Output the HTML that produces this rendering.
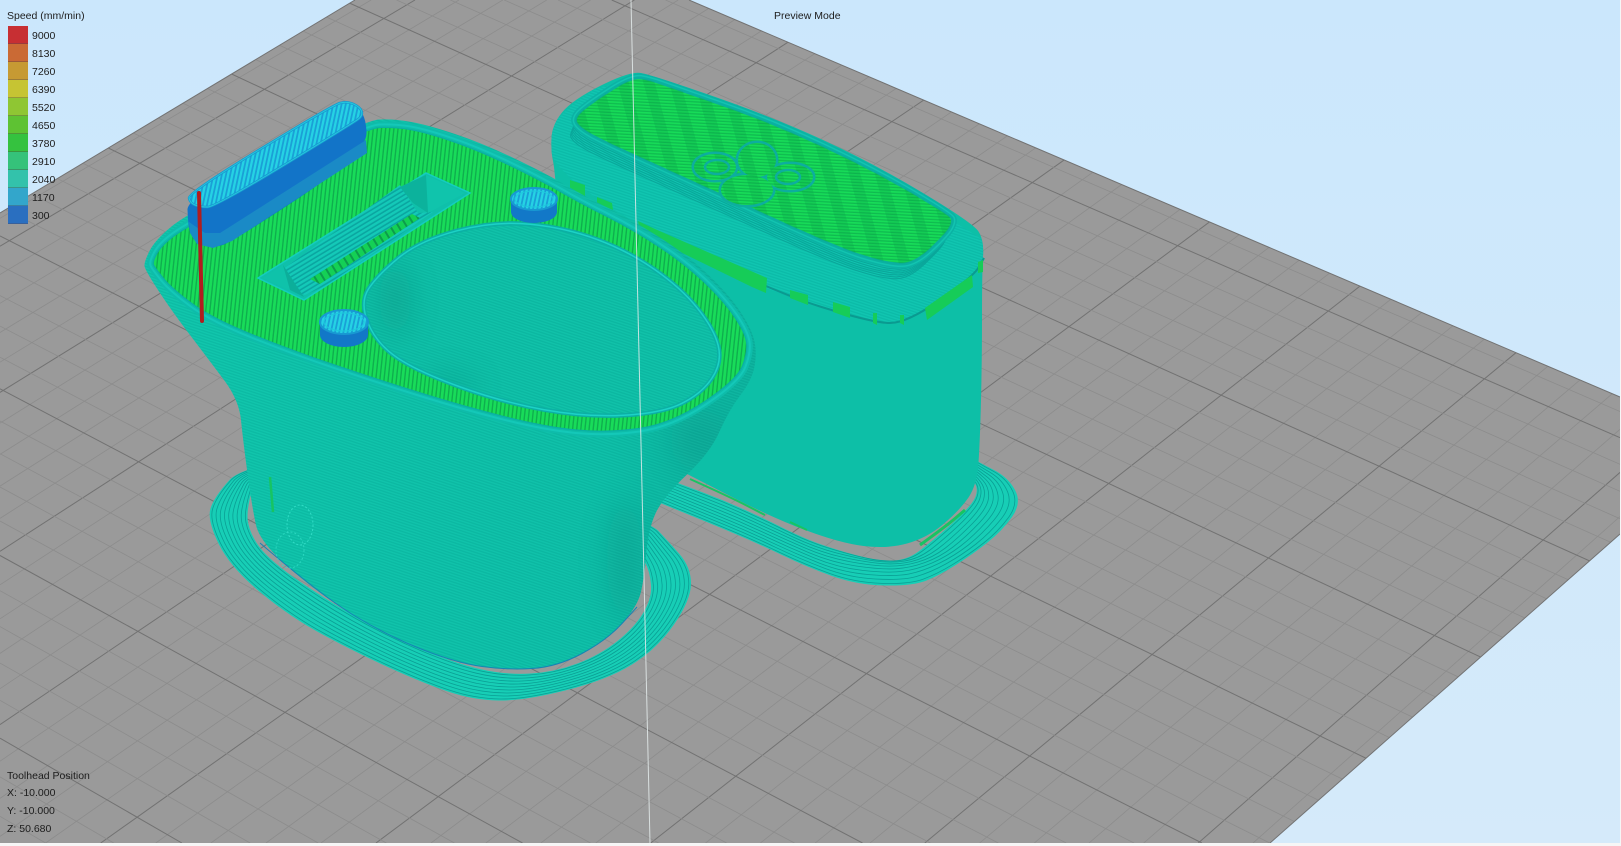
<!DOCTYPE html>
<html><head><meta charset="utf-8"><title>Preview Mode</title>
<style>
html,body{margin:0;padding:0;background:#f6f6f6;}
#w{position:relative;width:1621px;height:846px;overflow:hidden;font-family:"Liberation Sans",sans-serif;font-size:10.5px;color:#1c1c1c;}
svg{position:absolute;left:0;top:0;}
.t{position:absolute;line-height:14px;white-space:pre;}
.sw{position:absolute;left:8px;width:20px;height:17px;border:0 solid;border-bottom-width:1px;box-sizing:content-box;}
</style></head><body><div id="w">
<svg id="s" width="1621" height="846" viewBox="0 0 1621 846" xmlns="http://www.w3.org/2000/svg">
<defs>
<linearGradient id="bg" x1="0" y1="0" x2="0" y2="1"><stop offset="0" stop-color="#cbe7fc"/><stop offset="1" stop-color="#d5eafa"/></linearGradient>
<linearGradient id="bodyg" x1="0" y1="0" x2="1" y2="0"><stop offset="0" stop-color="#0ec3aa"/><stop offset=".75" stop-color="#0cbda6"/><stop offset="1" stop-color="#0bb09c"/></linearGradient>
<pattern id="gs" width="4.1" height="4.1" patternUnits="userSpaceOnUse" patternTransform="rotate(6)"><rect width="4.1" height="4.1" fill="#0fae4e"/><rect width="2.7" height="4.1" fill="#18dc59"/></pattern>
<pattern id="fh" width="3" height="3" patternUnits="userSpaceOnUse" patternTransform="rotate(3)"><rect width="3" height="3" fill="#0fbb50"/><rect width="3" height="1.7" fill="#17dc58"/></pattern>
<pattern id="mb" width="25" height="25" patternUnits="userSpaceOnUse" patternTransform="rotate(-15)"><rect width="11" height="25" fill="#0a9a45" opacity=".24"/></pattern>
<pattern id="ll" width="3" height="2.7" patternUnits="userSpaceOnUse" patternTransform="rotate(18)"><rect width="3" height="1" fill="#078f83" opacity=".16"/><rect y="1.4" width="3" height=".8" fill="#30e0c8" opacity=".12"/></pattern>
<pattern id="th" width="4.1" height="4.1" patternUnits="userSpaceOnUse" patternTransform="rotate(12)"><rect width="4.1" height="4.1" fill="#1aa0d6"/><rect width="2.3" height="4.1" fill="#25d2e4"/></pattern>
<pattern id="sl" width="4" height="4" patternUnits="userSpaceOnUse" patternTransform="rotate(-31)"><rect width="4" height="4" fill="#0aa6a0"/><rect width="4" height="2.4" fill="#14c9b8"/></pattern>
<pattern id="gd" width="7" height="7" patternUnits="userSpaceOnUse" patternTransform="rotate(-31)"><rect width="7" height="7" fill="#14d055"/><rect width="2" height="7" fill="#0c9c4c"/></pattern>
<clipPath id="pc"><polygon points="355,0 689,0 1620,397 1620,534 1270,843 0,843 0,213"/></clipPath>
<filter id="bl" x="-150%" y="-150%" width="400%" height="400%"><feGaussianBlur stdDeviation="14"/></filter>
</defs>
<rect width="1621" height="846" fill="url(#bg)"/>
<polygon points="355,0 689,0 1620,397 1620,534 1270,843 0,843 0,213" fill="#9a9a9a"/>
<g id="grid" clip-path="url(#pc)" fill="none"></g>
<polyline points="0,213 355,0" fill="none" stroke="#727272"/>
<polyline points="689,0 1620,397" fill="none" stroke="#727272"/>
<polyline points="1620,534 1270,843" fill="none" stroke="#727272"/>
<g id="m"></g>
<line x1="631" y1="0" x2="650" y2="843" stroke="#e4ecec" stroke-width="1" opacity=".85"/>
<rect x="0" y="843" width="1621" height="3" fill="#f6f6f6"/>
<rect x="1620" y="0" width="1" height="846" fill="#f6f6f6"/>
</svg>
<div class="t" style="left:7px;top:9px">Speed (mm/min)</div>
<div class="sw" style="top:26px;background:#c72f33;border-color:#9a3a3c"></div>
<div class="sw" style="top:44px;background:#ca6a35;border-color:#9c5a38"></div>
<div class="sw" style="top:62px;background:#c69a33;border-color:#9a7c38"></div>
<div class="sw" style="top:80px;background:#c6c433;border-color:#969838"></div>
<div class="sw" style="top:98px;background:#8fc633;border-color:#709838"></div>
<div class="sw" style="top:116px;background:#5ec233;border-color:#4f9638"></div>
<div class="sw" style="top:134px;background:#35c23f;border-color:#3a9440"></div>
<div class="sw" style="top:152px;background:#35c27a;border-color:#3a9468"></div>
<div class="sw" style="top:170px;background:#33c2ab;border-color:#3a9488"></div>
<div class="sw" style="top:188px;background:#33a6cb;border-color:#3a80a0"></div>
<div class="sw" style="top:206px;background:#2a6fc0;border-color:#38609a"></div>
<div class="t" style="left:32px;top:29px">9000</div>
<div class="t" style="left:32px;top:47px">8130</div>
<div class="t" style="left:32px;top:65px">7260</div>
<div class="t" style="left:32px;top:83px">6390</div>
<div class="t" style="left:32px;top:101px">5520</div>
<div class="t" style="left:32px;top:119px">4650</div>
<div class="t" style="left:32px;top:137px">3780</div>
<div class="t" style="left:32px;top:155px">2910</div>
<div class="t" style="left:32px;top:173px">2040</div>
<div class="t" style="left:32px;top:191px">1170</div>
<div class="t" style="left:32px;top:209px">300</div>
<div class="t" style="left:774px;top:9px">Preview Mode</div>
<div class="t" style="left:7px;top:769px">Toolhead Position</div>
<div class="t" style="left:7px;top:786px">X: -10.000</div>
<div class="t" style="left:7px;top:804px">Y: -10.000</div>
<div class="t" style="left:7px;top:822px">Z: 50.680</div>
<script>
(function(){
var VA=[5774,-3179],VB=[-7075,-3337],H=-3250,g='';
function ln(V,y,maj){
  var m=(y-V[1])/(1200-V[0]),c=V[1]-m*V[0];
  var a=0,b=1620,x0=(0-c)/m,x1=(843-c)/m,lo=Math.min(x0,x1),hi=Math.max(x0,x1);
  a=Math.max(a,lo);b=Math.min(b,hi);
  if(a>=b)return '';
  return '<line x1="'+a.toFixed(1)+'" y1="'+(m*a+c).toFixed(1)+'" x2="'+b.toFixed(1)+'" y2="'+(m*b+c).toFixed(1)+'" stroke="'+(maj?'#727272':'#8c8c8c')+'" stroke-width="'+(maj?1:.8)+'"/>';
}
var i,k;
for(i=-40;i<=20;i++){k=i/5;g+=ln(VA,H+69720/(19.04-k),i%5==0);}
for(i=-5;i<=50;i++){k=i/5;g+=ln(VB,H+97800/(27.9-k),i%5==0);}
document.getElementById('grid').innerHTML=g;

function S(p,open){
  var n=p.length,s='',a,b,c;
  if(open){
    s='M'+p[0][0]+' '+p[0][1];
    for(var i=1;i<n-1;i++){b=p[i];c=p[i+1];s+=' Q'+b[0]+' '+b[1]+' '+((b[0]+c[0])/2).toFixed(1)+' '+((b[1]+c[1])/2).toFixed(1);}
    s+=' L'+p[n-1][0]+' '+p[n-1][1];
    return s;
  }
  a=p[n-1];b=p[0];
  s='M'+((a[0]+b[0])/2).toFixed(1)+' '+((a[1]+b[1])/2).toFixed(1);
  for(var j=0;j<n;j++){b=p[j];c=p[(j+1)%n];s+=' Q'+b[0]+' '+b[1]+' '+((b[0]+c[0])/2).toFixed(1)+' '+((b[1]+c[1])/2).toFixed(1);}
  return s+'Z';
}
function P(p,a){return '<path d="'+S(p)+'" '+a+'/>';}
function O(p,a){return '<path d="'+S(p,true)+'" fill="none" '+a+'/>';}
function L(p,a){return '<polygon points="'+p.map(function(q){return q.join(',');}).join(' ')+'" '+a+'/>';}
function lerp(A,B,t){return A.map(function(q,i){return [+(q[0]+(B[i][0]-q[0])*t).toFixed(1),+(q[1]+(B[i][1]-q[1])*t).toFixed(1)];});}
function rings(A,B,n,open){
  var s='',i,p;
  if(open){s+=P(A.concat(B.slice().reverse()),'fill="#17ceb6"');}
  else{s+='<path fill-rule="evenodd" fill="#17ceb6" d="'+S(A)+' '+S(B)+'"/>';}
  for(i=0;i<n;i++){p=lerp(A,B,(i+.5)/n);
    s+=(open?O(p,'stroke="#0a9f94" stroke-width=".8"'):P(p,'fill="none" stroke="#0a9f94" stroke-width=".8"'));}
  return s;
}
var h='';
/* brims */
h+=rings([[245,463],[214,497],[207,520],[230,567],[290,617],[357,653],[423,683],[473,700],[523,701],[607,680],[657,649],[691,600],[691,567],[667,540],[650,522],[450,440]],
         [[258,470],[248,503],[247,527],[265,557],[323,598],[390,636],[457,664],[507,675],[555,672],[600,655],[635,627],[652,598],[650,572],[640,552],[630,535],[450,440]],9,false);
h+=rings([[630,490],[660,503],[707,522],[757,543],[807,567],[857,585],[913,586],[940,575],[973,554],[1002,531],[1022,503],[1008,477],[978,462],[960,450]],
         [[640,470],[670,480],[683,485],[723,500],[763,518],[807,540],[847,553],[880,561],[907,560],[930,543],[965,512],[978,495],[975,480],[950,460]],9,true);
/* tank */
var tank=[[551,152],[552,125],[572,100],[630,71],[652,75],[773,117],[873,163],[973,223],[984,240],[982,273],[982,360],[980,440],[977,485],[960,510],[927,538],[887,549],[840,543],[773,518],[693,477],[640,450],[560,250],[555,170]];
h+='<clipPath id="tc"><path d="'+S(tank)+'"/></clipPath>';
h+=P(tank,'fill="#0dbfa7"');
h+='<g clip-path="url(#tc)">';
h+=P([[545,150],[552,118],[630,65],[990,235],[990,262],[907,324],[873,324],[767,291],[653,234],[575,185]],'fill="#0dc2ae"');
h+=P([[545,150],[552,118],[630,65],[990,235],[990,262],[907,324],[873,324],[767,291],[653,234],[575,185]],'fill="url(#ll)"');
var tt=[[574,118],[590,104],[632,77],[650,80],[673,88],[773,123],[873,170],[950,215],[953,222],[945,235],[915,263],[890,264],[838,248],[705,187],[603,141],[580,128]];
for(var r=0;r<9;r++){
  h+='<g transform="translate('+(-r*.7).toFixed(1)+' '+(r*1.9).toFixed(1)+')">'+P(tt,'fill="none" stroke="#0aa69a" stroke-width="1"')+'</g>';
}
h+=P(tt,'fill="none" stroke="#0bb2a4" stroke-width="10"')+P(tt,'fill="none" stroke="#12c4b0" stroke-width="7"')+P(tt,'fill="none" stroke="#0bb0a2" stroke-width="4"');
h+='</g>';
h+=P(tt,'fill="url(#fh)" stroke="#0ab09f" stroke-width="1.5"')+P(tt,'fill="url(#mb)"');
/* clover */
var cl=[[757,160,19,17],[715,167,21,13],[747,190,26,15],[790,177,23,13]];
cl.forEach(function(c){h+='<ellipse cx="'+c[0]+'" cy="'+c[1]+'" rx="'+c[2]+'" ry="'+c[3]+'" fill="none" stroke="#0dae9e" stroke-width="5"/>';});
cl.forEach(function(c){h+='<ellipse cx="'+c[0]+'" cy="'+c[1]+'" rx="'+c[2]+'" ry="'+c[3]+'" fill="url(#fh)"/>';});
cl.forEach(function(c){h+='<ellipse cx="'+c[0]+'" cy="'+c[1]+'" rx="'+c[2]+'" ry="'+c[3]+'" fill="url(#mb)"/>';});
h+='<ellipse cx="717" cy="167" rx="12" ry="7" fill="none" stroke="#0dae9e" stroke-width="2.5"/><ellipse cx="788" cy="177" rx="12" ry="7" fill="none" stroke="#0dae9e" stroke-width="2.5"/>';
/* tank seam + patches */
h+=O([[653,233],[767,290],[873,323],[907,323],[973,277],[984,258]],'stroke="#0a9a90" stroke-width="2"');
var pg=[[[638,221],[655,229],[767,278],[766,293],[752,287],[670,247],[640,232]],
[[570,180],[585,185],[585,197],[570,190]],[[597,197],[612,203],[613,210],[597,203]],
[[790,290],[808,295],[808,305],[790,298]],[[833,302],[850,307],[850,318],[833,312]],
[[873,313],[877,313],[877,325],[873,323]],[[900,315],[904,315],[904,325],[900,323]],
[[925,308],[972,275],[973,287],[927,320]],[[978,262],[983,260],[983,272],[978,273]]];
pg.forEach(function(q){h+=L(q,'fill="#16cc58"');});
h+=O([[690,479],[730,497],[765,515]],'stroke="#17c462" stroke-width="2"');
h+=O([[920,545],[945,527],[965,510]],'stroke="#17c462" stroke-width="3"');
h+=O([[790,522],[807,530]],'stroke="#17c462" stroke-width="2"');
/* bowl body */
var body=[[144,262],[155,240],[188,213],[364,120],[395,119],[428,125],[482,143],[545,173],[586,197],[636,222],[690,257],[731,297],[752,330],[757,353],[752,380],[729,410],[710,453],[663,497],[648,530],[644,580],[637,607],[607,640],[557,667],[507,670],[457,663],[390,637],[323,597],[260,543],[252,507],[243,440],[239,400],[209,360],[171,310],[145,270]];
h+='<clipPath id="bc"><path d="'+S(body)+'"/></clipPath>';
h+=P(body,'fill="url(#bodyg)"');
h+='<g clip-path="url(#bc)"><ellipse cx="625" cy="560" rx="18" ry="60" fill="#079184" opacity=".4" filter="url(#bl)"/><ellipse cx="700" cy="440" rx="30" ry="30" fill="#079184" opacity=".35" filter="url(#bl)"/></g>';
h+=P(body,'fill="url(#ll)"');
h+=O([[260,543],[323,597],[390,637],[457,663],[507,670],[557,667],[607,640],[637,607]],'stroke="#1684b4" stroke-width="1"');
/* seat */
var seat=[[152,262],[163,243],[195,222],[364,128],[395,127],[425,132],[478,150],[540,180],[582,204],[632,229],[684,263],[723,300],[745,332],[748,352],[737,380],[671,424],[607,433],[545,427],[462,406],[379,380],[296,352],[213,319],[172,289],[155,268]];
[12,8,4].forEach(function(w,i){h+=P(seat,'fill="none" stroke="'+(i%2?'#14c8b8':'#0ebcaa')+'" stroke-width="'+w+'"');});
h+=P(seat,'fill="url(#gs)" stroke="#0ab0a4" stroke-width="1.2"');
/* bowl opening */
var bowl=[[362,303],[379,277],[420,243],[495,223],[565,230],[627,253],[680,290],[712,330],[720,362],[700,392],[661,411],[586,415],[503,400],[420,370],[379,343]];
h+='<clipPath id="oc"><path d="'+S(bowl)+'"/></clipPath>';
[9,6,3].forEach(function(w,i){h+=P(bowl,'fill="none" stroke="'+(i%2?'#1cd2c6':'#0bb0a4')+'" stroke-width="'+w+'"');});
h+=P(bowl,'fill="#0dbea6"');
h+='<g clip-path="url(#oc)"><ellipse cx="395" cy="300" rx="16" ry="36" fill="#07907f" opacity=".45" filter="url(#bl)"/><ellipse cx="450" cy="385" rx="28" ry="10" fill="#07907f" opacity=".4" filter="url(#bl)"/></g>';
h+=P(bowl,'fill="url(#ll)"');
/* slot */
h+=L([[258,278],[426,173],[470,193],[304,300]],'fill="#0fc0aa" stroke="#14ccc0" stroke-width="1.5"');
h+=L([[268,280],[400,185],[418,213],[433,212],[327,285],[305,295]],'fill="url(#sl)"');
h+=L([[310,279],[412,214],[420,218],[320,284]],'fill="url(#gd)"');
h+=L([[400,187],[426,175],[465,193],[428,213],[413,203]],'fill="#10c4ac"');
h+=L([[400,187],[426,175],[428,213],[413,203]],'fill="#0cb29c"');
h+=L([[263,278],[283,265],[296,285],[304,297]],'fill="#0fc2aa"');
h+=L([[283,265],[296,285],[304,297],[290,290]],'fill="#0cae9a"');
/* tab */
h+=P([[187,197],[188,222],[190,233],[197,244],[213,248],[232,242],[367,153],[366,113],[347,102]],'fill="#1274c8"');
h+=L([[189,222],[205,233],[220,233],[366,140],[367,153],[232,241],[213,248],[197,244],[190,233]],'fill="#1a8ac6"');
var tf=[[188,193],[333,105],[347,101],[360,107],[363,115],[355,122],[215,207],[200,207],[190,203]];
h+=P(tf,'fill="url(#th)" stroke="#1798d0" stroke-width="2.5"');
h+=P(tf,'fill="none" stroke="#24c8dc" stroke-width="1"');
/* knobs */
function knob(cx,cy,rx,ry,d){
  return '<path d="M'+(cx-rx)+' '+cy+' V'+(cy+d)+' A'+rx+' '+ry+' 0 0 0 '+(cx+rx)+' '+(cy+d)+' V'+cy+' Z" fill="#1278c8"/>'+
  '<ellipse cx="'+cx+'" cy="'+cy+'" rx="'+rx+'" ry="'+ry+'" fill="url(#th)" stroke="#1899d2" stroke-width="2"/>'+
  '<ellipse cx="'+cx+'" cy="'+cy+'" rx="'+(rx-4)+'" ry="'+(ry-3)+'" fill="none" stroke="#1ec8dc" stroke-width="1"/>';
}
h+=knob(534,199,23,11,13)+knob(344,322,24,12,13);
/* front logo */
h+='<line x1="270" y1="477" x2="273" y2="512" stroke="#17c462" stroke-width="2.5"/>';
h+='<ellipse cx="300" cy="525" rx="13" ry="20" fill="none" stroke="#32dcc6" stroke-width="1" stroke-dasharray="2 2"/>';
h+='<ellipse cx="290" cy="550" rx="14" ry="18" fill="none" stroke="#32dcc6" stroke-width="1" stroke-dasharray="2 2" opacity=".8"/>';
/* red toolhead line */
h+='<line x1="199" y1="193" x2="202" y2="321" stroke="#b01d1f" stroke-width="4" stroke-linecap="round"/>';
document.getElementById('m').innerHTML=h;
})();
</script>
</div></body></html>
